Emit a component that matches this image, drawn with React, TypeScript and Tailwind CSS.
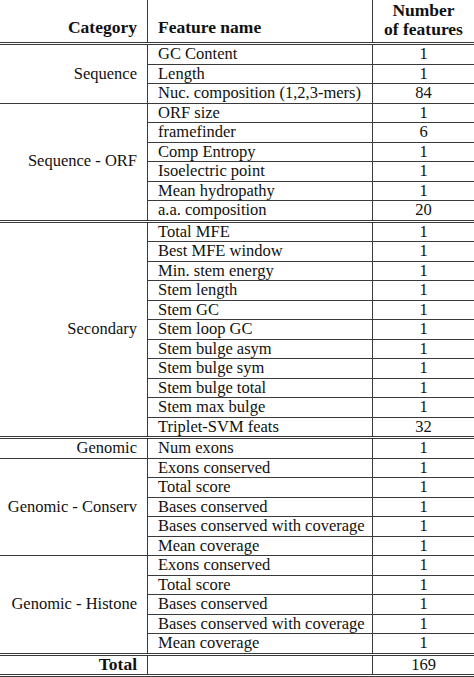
import React from "react";

type Group = {
  label: string;
  rows: [string, string][];
  sep: "none" | "single" | "double";
  bold?: boolean;
};

const groups: Group[] = [
  {
    label: "Sequence",
    sep: "double",
    rows: [
      ["GC Content", "1"],
      ["Length", "1"],
      ["Nuc. composition (1,2,3-mers)", "84"],
    ],
  },
  {
    label: "Sequence - ORF",
    sep: "single",
    rows: [
      ["ORF size", "1"],
      ["framefinder", "6"],
      ["Comp Entropy", "1"],
      ["Isoelectric point", "1"],
      ["Mean hydropathy", "1"],
      ["a.a. composition", "20"],
    ],
  },
  {
    label: "Secondary",
    sep: "double",
    rows: [
      ["Total MFE", "1"],
      ["Best MFE window", "1"],
      ["Min. stem energy", "1"],
      ["Stem length", "1"],
      ["Stem GC", "1"],
      ["Stem loop GC", "1"],
      ["Stem bulge asym", "1"],
      ["Stem bulge sym", "1"],
      ["Stem bulge total", "1"],
      ["Stem max bulge", "1"],
      ["Triplet-SVM feats", "32"],
    ],
  },
  {
    label: "Genomic",
    sep: "double",
    rows: [["Num exons", "1"]],
  },
  {
    label: "Genomic - Conserv",
    sep: "single",
    rows: [
      ["Exons conserved", "1"],
      ["Total score", "1"],
      ["Bases conserved", "1"],
      ["Bases conserved with coverage", "1"],
      ["Mean coverage", "1"],
    ],
  },
  {
    label: "Genomic - Histone",
    sep: "single",
    rows: [
      ["Exons conserved", "1"],
      ["Total score", "1"],
      ["Bases conserved", "1"],
      ["Bases conserved with coverage", "1"],
      ["Mean coverage", "1"],
    ],
  },
  {
    label: "Total",
    sep: "double",
    bold: true,
    rows: [["", "169"]],
  },
];

export default function App() {
  return (
    <div
      className="w-[474px] h-[677px] overflow-hidden bg-white text-[#111] text-[16.5px] leading-none"
      style={{ fontFamily: '"Liberation Serif", "Times New Roman", serif' }}
    >
      {/* header */}
      <div className="flex h-[42px] font-bold text-[17.5px]">
        <div className="w-[148px] flex items-end justify-end pr-[10px] pb-[6px] border-r border-[#3a3a3a]">
          Category
        </div>
        <div className="w-[225px] flex items-end pl-[10px] pb-[6px] border-r border-[#3a3a3a]">
          Feature name
        </div>
        <div className="flex-1 flex flex-col items-center justify-end pb-[3px] leading-[19px]">
          <span>Number</span>
          <span>of features</span>
        </div>
      </div>

      {groups.map((g, gi) => (
        <div
          key={gi}
          className={
            "flex border-[#3a3a3a] " +
            (g.sep === "double"
              ? "border-t-[3px] border-double"
              : g.sep === "single"
              ? "border-t"
              : "") +
            (gi === groups.length - 1 ? " border-b-[3px]" : "")
          }
        >
          <div
            className={
              "w-[148px] flex items-center justify-end pr-[10px] border-r border-[#3a3a3a] " +
              (g.bold ? "font-bold text-[17.5px]" : "")
            }
          >
            {g.label}
          </div>
          <div className="flex-1 flex flex-col">
            {g.rows.map(([name, num], ri) => (
              <div
                key={ri}
                className={
                  "flex h-[18.5px] box-content " +
                  (ri > 0 ? "border-t border-[#3a3a3a]" : "")
                }
              >
                <div className="w-[225px] flex items-center pl-[10px] border-r border-[#3a3a3a] whitespace-nowrap">
                  {name}
                </div>
                <div className="flex-1 flex items-center justify-center">
                  {num}
                </div>
              </div>
            ))}
          </div>
        </div>
      ))}
    </div>
  );
}
